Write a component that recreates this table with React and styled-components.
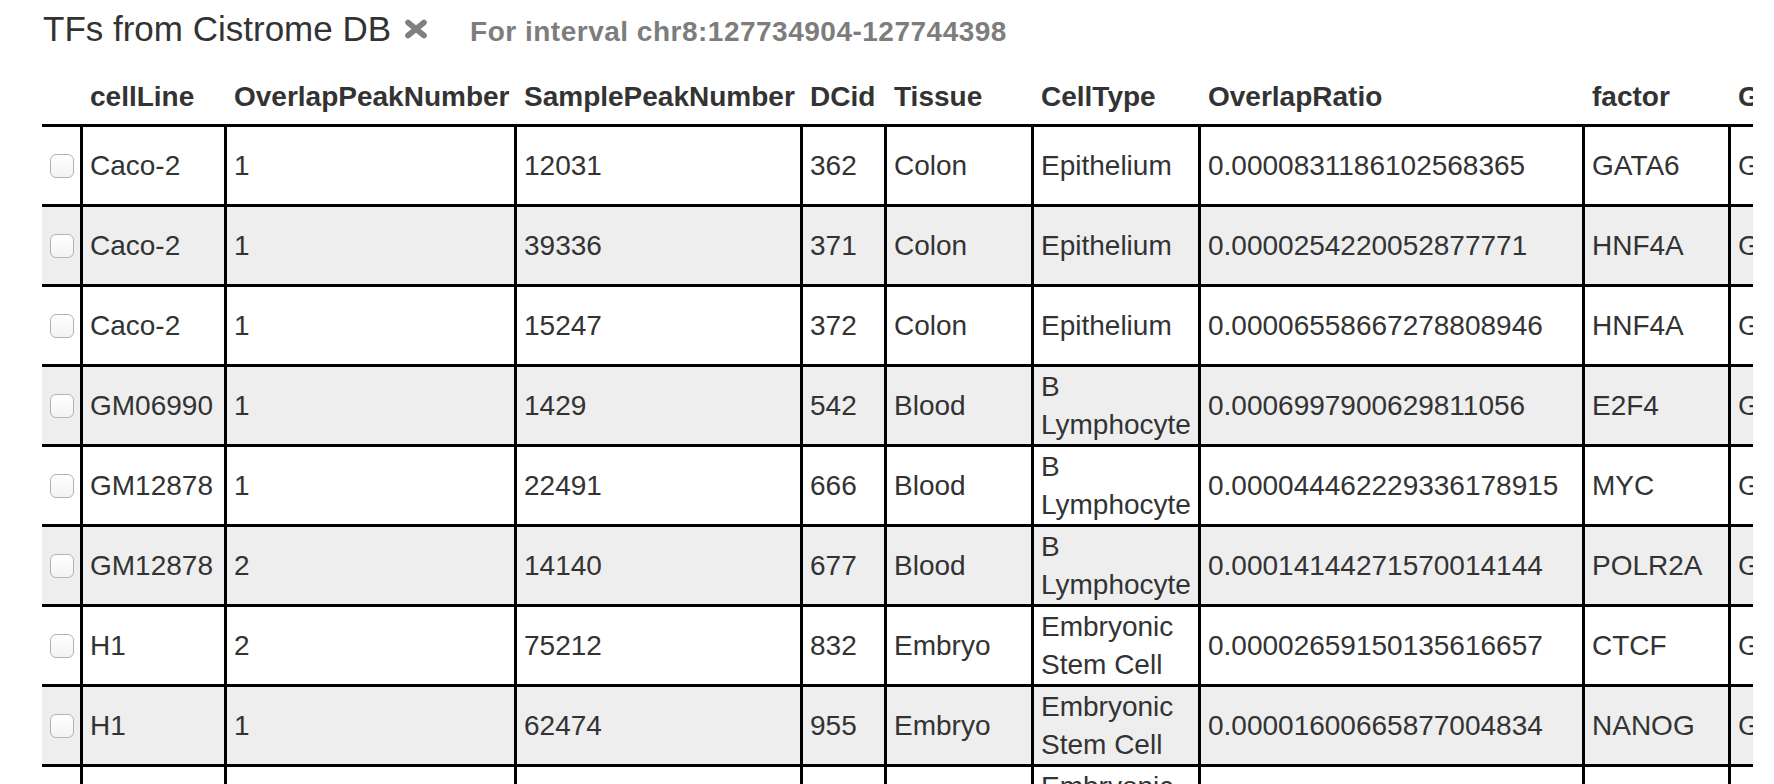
import React from "react";
import styled, { createGlobalStyle } from "styled-components";

const GlobalStyle = createGlobalStyle`
  html, body {
    margin: 0;
    padding: 0;
    overflow: hidden;
    background: #fff;
  }
  body {
    font-family: "Liberation Sans", Arial, Helvetica, sans-serif;
    color: #333;
  }
  * {
    box-sizing: border-box;
  }
`;

const Page = styled.div`
  padding: 9px 21px 0 42px;
`;

const TitleRow = styled.div`
  display: flex;
  align-items: baseline;
  height: 40px;
`;

const Title = styled.h3`
  margin: 0 0 0 1px;
  font-size: 35px;
  font-weight: 400;
  line-height: 40px;
  color: #333;
`;

const CloseButton = styled.span`
  align-self: center;
  display: flex;
  margin-left: 13px;
  color: #7f7f7f;
  cursor: pointer;
`;

const Interval = styled.span`
  margin-left: 42px;
  font-size: 28px;
  font-weight: 700;
  letter-spacing: 0.5px;
  line-height: 40px;
  color: #7d7d7d;
`;

const TableWrap = styled.div`
  margin-top: 29px;
  overflow: hidden;
`;

const Table = styled.table`
  table-layout: fixed;
  border-collapse: separate;
  border-spacing: 0;
  width: ${(p) => p.$width}px;
  font-size: 28px;
  line-height: 38px;
`;

const Col = styled.col`
  width: ${(p) => p.$w}px;
`;

const HeadCell = styled.th`
  padding: 0 4px 8px 10px;
  text-align: left;
  font-weight: 700;
  white-space: nowrap;
  color: #333;
  border-bottom: 3px solid #000;
  vertical-align: bottom;
`;

const Row = styled.tr`
  background: ${(p) => (p.$striped ? "#eeeeee" : "#ffffff")};
`;

const Cell = styled.td`
  height: 80px;
  padding: 1px 4px 0 7px;
  vertical-align: middle;
  text-align: left;
  color: #333;
  border-bottom: 3px solid #000;
  border-left: ${(p) => (p.$first ? "none" : "3px solid #000")};
  ${(p) => p.$first && "padding: 0 0 0 2px; text-align: center;"}
  white-space: ${(p) => (p.$nowrap ? "nowrap" : "normal")};
  overflow: visible;
`;

const Check = styled.input`
  appearance: none;
  -webkit-appearance: none;
  display: block;
  margin: 0 auto;
  width: 24px;
  height: 24px;
  border: 1px solid #b3b3b3;
  border-radius: 6px;
  background: linear-gradient(#ffffff, #f3f3f3);
`;

const CloseIcon = () => (
  <svg width="24" height="20" viewBox="0 0 24 20">
    <path
      d="M4 3.5 L20 16.5 M20 3.5 L4 16.5"
      stroke="currentColor"
      strokeWidth="5.6"
      strokeLinecap="round"
      fill="none"
    />
  </svg>
);

const columns = [
  { key: "check", label: "", w: 38 },
  { key: "cellLine", label: "cellLine", w: 144 },
  { key: "overlap", label: "OverlapPeakNumber", w: 290 },
  { key: "sample", label: "SamplePeakNumber", w: 286 },
  { key: "dcid", label: "DCid", w: 84 },
  { key: "tissue", label: "Tissue", w: 147 },
  { key: "cellType", label: "CellType", w: 167 },
  { key: "ratio", label: "OverlapRatio", w: 384 },
  { key: "factor", label: "factor", w: 146 },
  { key: "gsm", label: "GSMID", w: 240 },
];

const rows = [
  ["Caco-2", "1", "12031", "362", "Colon", "Epithelium", "0.0000831186102568365", "GATA6", "GSM1038246"],
  ["Caco-2", "1", "39336", "371", "Colon", "Epithelium", "0.0000254220052877771", "HNF4A", "GSM1038247"],
  ["Caco-2", "1", "15247", "372", "Colon", "Epithelium", "0.00006558667278808946", "HNF4A", "GSM1038248"],
  ["GM06990", "1", "1429", "542", "Blood", "B Lymphocyte", "0.0006997900629811056", "E2F4", "GSM1038249"],
  ["GM12878", "1", "22491", "666", "Blood", "B Lymphocyte", "0.000044462229336178915", "MYC", "GSM1038250"],
  ["GM12878", "2", "14140", "677", "Blood", "B Lymphocyte", "0.00014144271570014144", "POLR2A", "GSM1038251"],
  ["H1", "2", "75212", "832", "Embryo", "Embryonic Stem Cell", "0.00002659150135616657", "CTCF", "GSM1038252"],
  ["H1", "1", "62474", "955", "Embryo", "Embryonic Stem Cell", "0.00001600665877004834", "NANOG", "GSM1038253"],
  ["H1", "1", "40215", "1012", "Embryo", "Embryonic Stem Cell", "0.00002486665877004834", "POU5F1", "GSM1038254"],
];

const tableWidth = columns.reduce((sum, c) => sum + c.w, 0);

const App = () => {
  return (
    <Page>
      <GlobalStyle />
      <TitleRow>
        <Title>TFs from Cistrome DB</Title>
        <CloseButton>
          <CloseIcon />
        </CloseButton>
        <Interval>For interval chr8:127734904-127744398</Interval>
      </TitleRow>
      <TableWrap>
        <Table $width={tableWidth}>
          <colgroup>
            {columns.map((c) => (
              <Col key={c.key} $w={c.w} />
            ))}
          </colgroup>
          <thead>
            <tr>
              {columns.map((c) => (
                <HeadCell key={c.key}>{c.label}</HeadCell>
              ))}
            </tr>
          </thead>
          <tbody>
            {rows.map((r, i) => (
              <Row key={i} $striped={i % 2 === 1}>
                <Cell $first>
                  <Check type="checkbox" />
                </Cell>
                {r.map((v, j) => (
                  <Cell key={j} $nowrap={j === 6 || j === 8}>
                    {v}
                  </Cell>
                ))}
              </Row>
            ))}
          </tbody>
        </Table>
      </TableWrap>
    </Page>
  );
};

export default App;
